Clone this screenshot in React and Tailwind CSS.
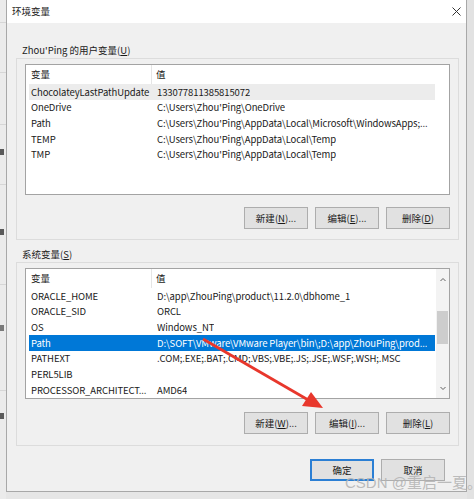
const userVars = [
  ['ChocolateyLastPathUpdate', '133077811385815072'],
  ['OneDrive', "C:\\Users\\Zhou'Ping\\OneDrive"],
  ['Path', "C:\\Users\\Zhou'Ping\\AppData\\Local\\Microsoft\\WindowsApps;..."],
  ['TEMP', "C:\\Users\\Zhou'Ping\\AppData\\Local\\Temp"],
  ['TMP', "C:\\Users\\Zhou'Ping\\AppData\\Local\\Temp"],
];

const sysVars = [
  ['ORACLE_HOME', 'D:\\app\\ZhouPing\\product\\11.2.0\\dbhome_1'],
  ['ORACLE_SID', 'ORCL'],
  ['OS', 'Windows_NT'],
  ['Path', 'D:\\SOFT\\VMware\\VMware Player\\bin\\;D:\\app\\ZhouPing\\prod...'],
  ['PATHEXT', '.COM;.EXE;.BAT;.CMD;.VBS;.VBE;.JS;.JSE;.WSF;.WSH;.MSC'],
  ['PERL5LIB', ''],
  ['PROCESSOR_ARCHITECT...', 'AMD64'],
];

function Btn({ label, keyChar, dots, primary }) {
  return (
    <button
      className={
        'flex h-[22px] w-[64px] items-center justify-center bg-[#e1e1e1] text-[9.5px] text-[#1a1a1a] ' +
        (primary ? 'border-2 border-[#2b7fd4]' : 'border border-[#adadad]')
      }
    >
      {label}
      {keyChar ? (
        <span>
          (<span className="underline">{keyChar}</span>)
        </span>
      ) : null}
      {dots ? '...' : ''}
    </button>
  );
}

function VarList({ rows, hover, selected, scroll }) {
  return (
    <div className="relative h-[131px] w-[425px] overflow-hidden border border-[#a3a3a3] bg-white">
      <div className="flex h-[19px] items-center text-[9.5px] text-[#1a1a1a]">
        <div className="h-full w-[126px] shrink-0 border-r border-[#e5e5e5] pl-[5px] leading-[19px]">变量</div>
        <div className="pl-[4px]">值</div>
      </div>
      <div className="flex flex-col pl-[3px]">
        {rows.map(([name, value], i) => (
          <div
            key={`row-${i}`}
            className={
              'flex h-[15.7px] w-[406px] items-center whitespace-nowrap text-[9.5px] tracking-[-0.1px] ' +
              (i === selected
                ? 'bg-[#0078d7] text-white'
                : i === hover
                  ? 'bg-[#ececec] text-[#1a1a1a]'
                  : 'text-[#1a1a1a]')
            }
          >
            <div className="w-[123px] shrink-0 overflow-hidden pl-[2px]">{name}</div>
            <div className="overflow-hidden pl-[5px]">{value}</div>
          </div>
        ))}
      </div>
      {scroll ? (
        <div className="absolute right-0 top-0 flex h-full w-[13px] flex-col items-center bg-[#f3f3f3]">
          <svg width="8" height="20" viewBox="0 0 8 20" className="mt-[1px]">
            <path d="M1.5 11 L4 8.5 L6.5 11" fill="none" stroke="#606060" strokeWidth="1" />
          </svg>
          <div className="mt-[21px] h-[33px] w-[11px] bg-[#cdcdcd]" />
          <div className="flex-1" />
          <svg width="8" height="16" viewBox="0 0 8 16" className="mb-[1px]">
            <path d="M1.5 6 L4 8.5 L6.5 6" fill="none" stroke="#606060" strokeWidth="1" />
          </svg>
        </div>
      ) : null}
    </div>
  );
}

function GroupBox({ title, keyChar, children }) {
  return (
    <div className="flex flex-col">
      <div className="h-[15px] pl-[6px] text-[9.5px] leading-[15px] text-[#1a1a1a]">
        {title}(<span className="underline">{keyChar}</span>)
      </div>
      <div className="flex w-[443px] flex-col border border-[#dcdcdc] px-[8px] pt-[5px]">{children}</div>
    </div>
  );
}

export default function App() {
  return (
    <div className="relative flex h-[499px] w-[474px] overflow-hidden bg-[#e6e6e6] font-['Noto_Sans_CJK_SC',sans-serif]">
      <div className="flex h-full w-[6px] flex-col bg-[#ebebeb]">
        <div className="h-[23px] border-b border-[#d6d6d6]" />
        <div className="h-[50px] border-b border-[#d6d6d6]" />
        <div className="h-[52px] border-b border-[#d6d6d6]" />
        <div className="mt-[24px] h-[6px] w-[4px] bg-[#5a5a5a]" />
        <div className="h-[30px] border-b border-[#d6d6d6]" />
        <div className="mt-[44px] h-[6px] w-[4px] bg-[#5a5a5a]" />
        <div className="h-[50px] border-b border-[#d6d6d6]" />
        <div className="mt-[40px] h-[6px] w-[4px] bg-[#7a7a7a]" />
        <div className="h-[60px] border-b border-[#d6d6d6]" />
        <div className="mt-[22px] h-[6px] w-[4px] bg-[#5a5a5a]" />
      </div>

      <div className="flex h-[492px] w-[461px] flex-col border-x border-b border-[#a8a8a8] bg-[#f0f0f0]">
        <div className="flex h-[23px] items-center justify-between bg-white pl-[5px] pr-[5px]">
          <span className="text-[9.5px] text-[#1a1a1a]">环境变量</span>
          <svg width="9" height="9" viewBox="0 0 9 9">
            <path d="M0.5 0.5 L8.5 8.5 M8.5 0.5 L0.5 8.5" stroke="#333" strokeWidth="1" />
          </svg>
        </div>

        <div className="flex flex-col pl-[9px] pt-[20px]">
          <GroupBox title="Zhou'Ping 的用户变量" keyChar="U">
            <VarList rows={userVars} hover={0} />
            <div className="mt-[12px] flex justify-end gap-[7px] pb-[10px]">
              <Btn label="新建" keyChar="N" dots />
              <Btn label="编辑" keyChar="E" dots />
              <Btn label="删除" keyChar="D" />
            </div>
          </GroupBox>

          <div className="mt-[7px]">
            <GroupBox title="系统变量" keyChar="S">
              <VarList rows={sysVars} selected={3} scroll />
              <div className="mt-[13px] flex justify-end gap-[7px] pb-[11px]">
                <Btn label="新建" keyChar="W" dots />
                <Btn label="编辑" keyChar="I" dots />
                <Btn label="删除" keyChar="L" />
              </div>
            </GroupBox>
          </div>

          <div className="mt-[13px] flex justify-end gap-[7px] pr-[21px]">
            <Btn label="确定" primary />
            <Btn label="取消" />
          </div>
        </div>
      </div>

      <div className="h-full flex-1 bg-[#e2e2e2]" />

      <svg className="pointer-events-none absolute left-0 top-0" width="474" height="499" viewBox="0 0 474 499">
        <line x1="203" y1="339" x2="310" y2="401" stroke="#e8372c" strokeWidth="2.8" />
        <polygon points="323,408 302,406 311,392" fill="#e8372c" />
      </svg>

      <div className="pointer-events-none absolute left-[345px] top-[474px] whitespace-nowrap text-[15px] leading-[18px] text-[#b4b4b4]/90 font-['Liberation_Sans','Noto_Sans_CJK_SC',sans-serif]">
        CSDN @重启一夏。
      </div>
    </div>
  );
}
